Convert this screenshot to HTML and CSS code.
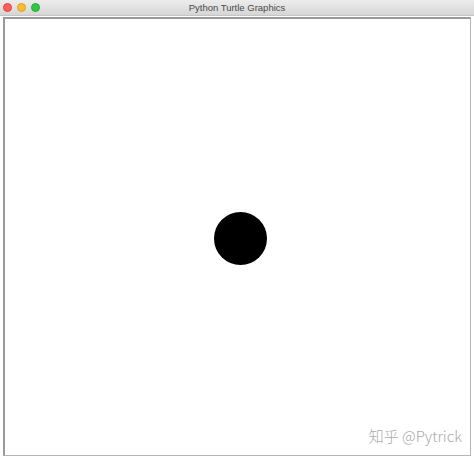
FILE: index.html
```html
<!DOCTYPE html>
<html lang="zh">
<head>
<meta charset="utf-8">
<title>Python Turtle Graphics</title>
<link rel="stylesheet" href="styles.css">
</head>
<body>
<div class="window">
  <div class="titlebar">
    <div class="lights">
      <span class="light red"></span>
      <span class="light yellow"></span>
      <span class="light green"></span>
    </div>
    <div class="title">Python Turtle Graphics</div>
  </div>
  <div class="canvas">
    <div class="dot"></div>
  </div>
  <div class="watermark">知乎 @Pytrick</div>
</div>
</body>
</html>
```
FILE: styles.css
```css
html, body {
  margin: 0;
  padding: 0;
  background: #ffffff;
}
.window {
  position: relative;
  width: 474px;
  height: 458px;
  display: flex;
  flex-direction: column;
  font-family: "Liberation Sans", Arial, sans-serif;
}
.titlebar {
  position: relative;
  height: 15px;
  background: linear-gradient(#ececec, #d6d6d6);
  border-bottom: 1px solid #c4c4c4;
  display: flex;
  align-items: center;
  padding-left: 3px;
}
.lights {
  display: flex;
  gap: 5px;
}
.light {
  width: 9px;
  height: 9px;
  border-radius: 50%;
  box-sizing: border-box;
}
.red { background: #fc5f57; border: 1px solid #e0443e; }
.yellow { background: #fdbc2e; border: 1px solid #dea123; }
.green { background: #33c748; border: 1px solid #27aa35; }
.title {
  position: absolute;
  left: 0;
  right: 0;
  top: 0;
  height: 15px;
  line-height: 15px;
  text-align: center;
  font-size: 9.5px;
  color: #4a4a4a;
}
.canvas {
  margin: 1px 3px 2px 3px;
  flex: 1;
  border: 1px solid #b5b5b5;
  border-left: 2px solid #9a9a9a;
  border-top: 2px solid #9a9a9a;
  display: grid;
  place-items: center;
  padding-left: 5px;
  padding-top: 3px;
}
.dot {
  width: 53px;
  height: 53px;
  border-radius: 50%;
  background: #000000;
}
.watermark {
  position: absolute;
  right: 12px;
  bottom: 13px;
  font-family: "Noto Sans CJK SC", "Noto Sans", sans-serif;
  font-weight: 300;
  font-size: 15px;
  line-height: 18px;
  color: #aaaaaa;
}
```
